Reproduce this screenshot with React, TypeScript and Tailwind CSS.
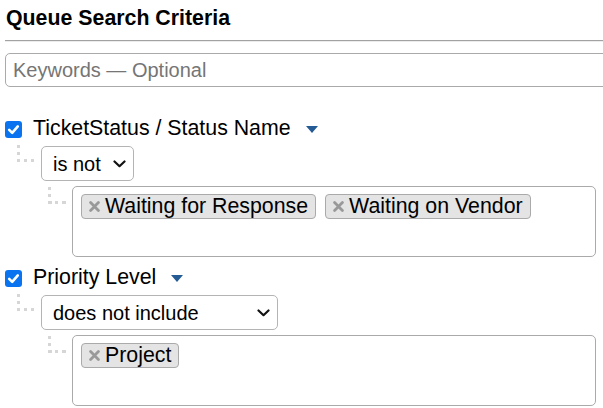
import React from "react";

const Check = () => (
  <span className="flex h-[17px] w-[17px] shrink-0 items-center justify-center rounded-[3px] bg-[#0a74f0]">
    <svg width="13" height="13" viewBox="0 0 13 13" fill="none">
      <path d="M2.2 6.8 L5.2 9.8 L10.8 3.4" stroke="#fff" strokeWidth="2.6" strokeLinecap="round" strokeLinejoin="round" />
    </svg>
  </span>
);

const Caret = () => (
  <svg width="12" height="7" viewBox="0 0 12 7" className="shrink-0">
    <path d="M0 0 H12 L6 7 Z" fill="#245b95" />
  </svg>
);

const Chevron = () => (
  <svg width="13" height="8" viewBox="0 0 13 8" fill="none" className="shrink-0">
    <path d="M1.5 1.5 L6.5 6.2 L11.5 1.5" stroke="#111" strokeWidth="2.2" strokeLinecap="round" strokeLinejoin="round" />
  </svg>
);

function Token({ label }: { label: string }) {
  return (
    <span className="flex h-[25px] items-center rounded-[4px] border border-[#aaa] bg-[#e4e4e4] pl-[7px] pr-[7px] text-[21.33px] leading-none">
      <svg width="11" height="11" viewBox="0 0 11 11" className="mr-[5px] shrink-0">
        <path d="M1.6 1.6 L9.4 9.4 M9.4 1.6 L1.6 9.4" stroke="#999" strokeWidth="2.8" strokeLinecap="round" />
      </svg>
      {label}
    </span>
  );
}

function Criterion({
  label,
  op,
  opWidth,
  tokens,
}: {
  label: string;
  op: string;
  opWidth: string;
  tokens: string[];
}) {
  return (
    <div className="flex flex-col">
      <div className="flex h-[28px] items-center">
        <Check />
        <span className="ml-[11px] text-[21.33px] leading-none">{label}</span>
        <span className="ml-[15px]">
          <Caret />
        </span>
      </div>
      <div className="mt-[3px] flex items-start">
        <div className="ml-[12px] mt-[-1px] h-[17px] w-[17px] border-b-[3px] border-l-[3px] border-dotted border-[#d6d6d6]" />
        <div className="ml-[7px] flex flex-col">
          <div
            className={`flex h-[35px] items-center justify-between rounded-[5px] border border-[#b4b4b4] pl-[11px] pr-[7px] text-[20px] leading-none ${opWidth}`}
          >
            <span>{op}</span>
            <Chevron />
          </div>
          <div className="mt-[5px] flex items-start">
            <div className="ml-[7px] mt-[1px] h-[17px] w-[18px] border-b-[3px] border-l-[3px] border-dotted border-[#d6d6d6]" />
            <div className="ml-[6px] flex h-[71px] w-[524px] flex-wrap items-start gap-[9px] rounded-[5px] border border-[#aaa] pl-[8px] pt-[7px]">
              {tokens.map((t) => (
                <Token key={t} label={t} />
              ))}
            </div>
          </div>
        </div>
      </div>
    </div>
  );
}

export default function App() {
  return (
    <div className="h-[408px] w-[603px] overflow-hidden bg-white font-['Liberation_Sans',Arial,sans-serif] text-black">
      <div className="w-[660px] pl-[5px] pt-[6px]">
        <h2 className="ml-[1px] text-[21.33px] font-bold leading-[24px]">Queue Search Criteria</h2>
        <div className="mt-[10px] border-b border-t border-b-[#ececec] border-t-[#a2a2a2]" />
        <div className="mt-[11px] flex h-[34px] items-center rounded-[5px] border border-[#aaa] pl-[7px] text-[20px] leading-none text-[#757575]">
          Keywords — Optional
        </div>
        <div className="mt-[28px]">
          <Criterion
            label="TicketStatus / Status Name"
            op="is not"
            opWidth="w-[93px]"
            tokens={["Waiting for Response", "Waiting on Vendor"]}
          />
        </div>
        <div className="mt-[7px]">
          <Criterion label="Priority Level" op="does not include" opWidth="w-[237px]" tokens={["Project"]} />
        </div>
      </div>
    </div>
  );
}
